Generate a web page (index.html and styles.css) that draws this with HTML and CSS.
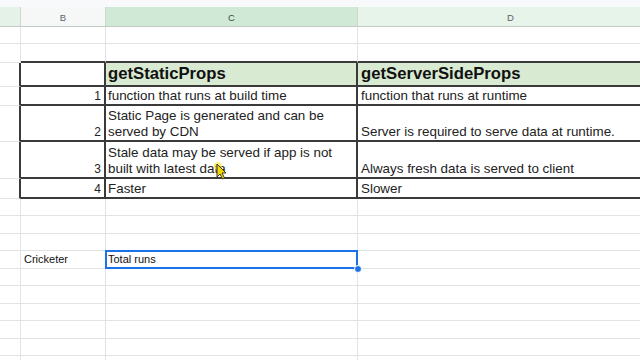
FILE: index.html
```html
<!DOCTYPE html>
<html>
<head>
<meta charset="utf-8">
<link rel="stylesheet" href="styles.css">
</head>
<body>
<div class="sheet">
  <div class="topstrip"></div>
  <div class="row hdr">
    <div class="ch ch-a"></div>
    <div class="ch ch-b">B</div>
    <div class="ch ch-c">C</div>
    <div class="ch ch-d">D</div>
  </div>
  <div class="row h17">
    <div class="c a"></div><div class="c"></div><div class="c"></div><div class="c"></div>
  </div>
  <div class="row h19 above-table">
    <div class="c a"></div><div class="c tb"></div><div class="c tb"></div><div class="c tb"></div>
  </div>
  <div class="row h24">
    <div class="c a ta"></div>
    <div class="c t"></div>
    <div class="c t th">getStaticProps</div>
    <div class="c t th">getServerSideProps</div>
  </div>
  <div class="row h19">
    <div class="c a ta"></div>
    <div class="c t num">1</div>
    <div class="c t txt">function that runs at build time</div>
    <div class="c t txt d">function that runs at runtime</div>
  </div>
  <div class="row h36">
    <div class="c a ta"></div>
    <div class="c t num">2</div>
    <div class="c t txt">Static Page is generated and can be<br>served by CDN</div>
    <div class="c t txt d">Server is required to serve data at runtime.</div>
  </div>
  <div class="row h37">
    <div class="c a ta"></div>
    <div class="c t num">3</div>
    <div class="c t txt">Stale data may be served if app is not<br>built with latest data</div>
    <div class="c t txt d">Always fresh data is served to client</div>
  </div>
  <div class="row h20">
    <div class="c a ta"></div>
    <div class="c t num">4</div>
    <div class="c t txt">Faster</div>
    <div class="c t txt d">Slower</div>
  </div>
  <div class="row h17">
    <div class="c a"></div><div class="c"></div><div class="c"></div><div class="c"></div>
  </div>
  <div class="row h18">
    <div class="c a"></div><div class="c"></div><div class="c"></div><div class="c"></div>
  </div>
  <div class="row h17">
    <div class="c a"></div><div class="c"></div><div class="c"></div><div class="c"></div>
  </div>
  <div class="row h18">
    <div class="c a"></div>
    <div class="c small">Cricketer</div>
    <div class="c small selected">Total runs<span class="handle"></span></div>
    <div class="c"></div>
  </div>
  <div class="row h17">
    <div class="c a"></div><div class="c"></div><div class="c"></div><div class="c"></div>
  </div>
  <div class="row h18">
    <div class="c a"></div><div class="c"></div><div class="c"></div><div class="c"></div>
  </div>
  <div class="row h17">
    <div class="c a"></div><div class="c"></div><div class="c"></div><div class="c"></div>
  </div>
  <div class="row h18">
    <div class="c a"></div><div class="c"></div><div class="c"></div><div class="c"></div>
  </div>
  <div class="row h17">
    <div class="c a"></div><div class="c"></div><div class="c"></div><div class="c"></div>
  </div>
  <div class="row h18">
    <div class="c a"></div><div class="c"></div><div class="c"></div><div class="c"></div>
  </div>
  <svg class="cursor" width="16" height="20" viewBox="0 0 16 20">
    <circle cx="4" cy="4" r="4" fill="#ffe94d" opacity="0.7"/>
    <path d="M3 2 L3 15 L6 12 L8.5 17 L10.5 16 L8 11 L12 11 Z" fill="#f2d600" stroke="#3a3a20" stroke-width="1" stroke-linejoin="round"/>
  </svg>
</div>
</body>
</html>
```

FILE: styles.css
```css
* { box-sizing: border-box; }
html, body {
  margin: 0;
  padding: 0;
  width: 640px;
  height: 360px;
  overflow: hidden;
  background: #ffffff;
}
.sheet {
  position: relative;
  width: 640px;
  height: 360px;
  overflow: hidden;
  font-family: "Liberation Sans", Arial, sans-serif;
  color: #222;
}
.topstrip {
  height: 7px;
  background: #f8f9fa;
}
.row {
  display: grid;
  grid-template-columns: 21px 85px 252px 306px;
}
.hdr { height: 20px; }
.h17 { height: 17px; }
.h18 { height: 18px; }
.h19 { height: 19px; }
.h20 { height: 20px; }
.h24 { height: 24px; }
.h36 { height: 36px; }
.h37 { height: 37px; }

.ch {
  display: flex;
  align-items: center;
  justify-content: center;
  font-size: 9.5px;
  color: #5f6368;
  border-right: 1px solid #cfd6d1;
  border-bottom: 1px solid #c4cbc6;
  padding-top: 1px;
}
.ch-a { background: #e4f2e7; }
.ch-b { background: #f5f8f6; }
.ch-c { background: #cfe9d6; color: #3c4a40; }
.ch-d { background: #e6f4ea; }

.c {
  display: flex;
  align-items: flex-end;
  border-right: 1px solid #e2e3e3;
  border-bottom: 1px solid #e2e3e3;
  white-space: nowrap;
  min-width: 0;
}
.ta { border-right: 2px solid #3a3a3a; }
.tb { border-bottom: 2px solid #3a3a3a; }
.t {
  border-right: 2px solid #3a3a3a;
  border-bottom: 2px solid #3a3a3a;
}
.th {
  background: #d9ead3;
  font-weight: bold;
  font-size: 16.7px;
  line-height: 20px;
  padding: 0 0 1px 2px;
  color: #111;
}
.th.t:last-child, .txt.d { padding-left: 3px; }
.txt {
  font-size: 13.4px;
  line-height: 16px;
  padding: 0 0 0 2px;
}
.num {
  justify-content: flex-end;
  font-size: 12px;
  line-height: 16px;
  padding-right: 3px;
  padding-bottom: 0;
}
.small {
  font-size: 11px;
  line-height: 15px;
  padding: 0 0 1px 3px;
  color: #111;
}
.selected {
  position: relative;
  padding-left: 2px;
}
.selected::after {
  content: "";
  position: absolute;
  top: -1px;
  left: -1px;
  right: -1px;
  bottom: -1px;
  border: 2px solid #1a73e8;
}
.handle {
  position: absolute;
  right: -5px;
  bottom: -5px;
  width: 8px;
  height: 8px;
  border-radius: 50%;
  background: #1a73e8;
  border: 1px solid #ffffff;
  z-index: 2;
}
.cursor {
  position: absolute;
  left: 214px;
  top: 162px;
}
```
